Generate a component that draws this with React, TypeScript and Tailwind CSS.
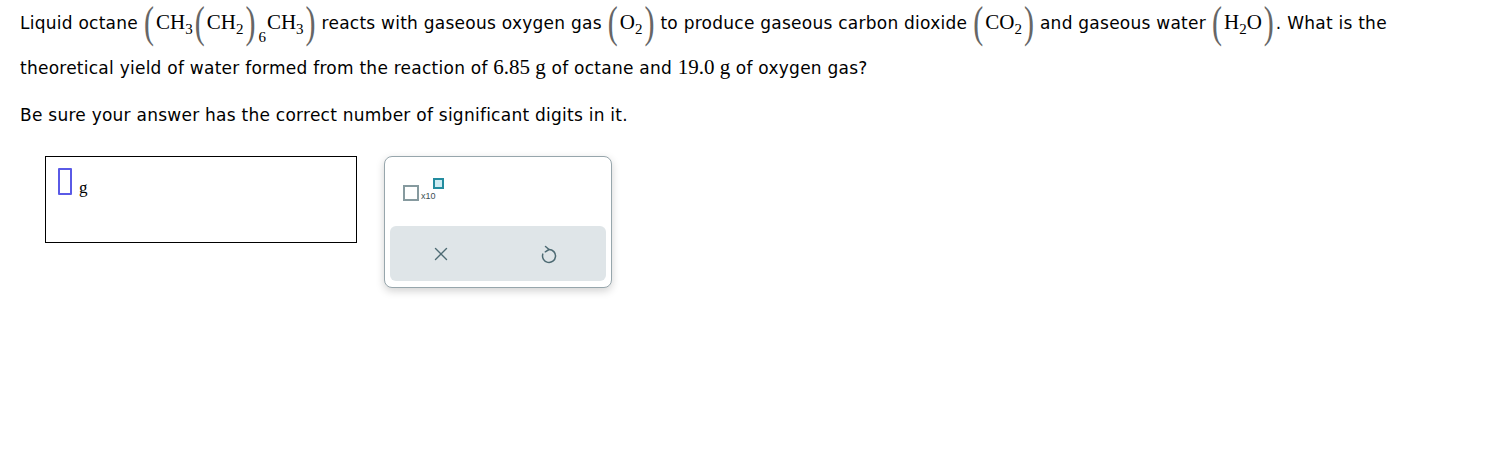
import { X } from "lucide-react";

const sans = "font-['Verdana','DejaVu_Sans',sans-serif]";
const serif = "font-['Liberation_Serif','Times_New_Roman',serif]";

function Paren({ c }: { c: string }) {
  return (
    <span className={`${serif} inline-block text-[30px] leading-[44px] text-[#666] scale-y-[1.45] relative top-[3px] mx-[2px]`}>
      {c}
    </span>
  );
}

function Sub({ n, low = false }: { n: string; low?: boolean }) {
  return (
    <span className={`inline-block text-[15px] leading-none relative ${low ? "top-[13px] mx-[1px]" : "top-[5px]"}`}>{n}</span>
  );
}

function Math({ children }: { children: React.ReactNode }) {
  return <span className={`${serif} text-[21px] tracking-normal inline-flex items-baseline mx-[4px]`}>{children}</span>;
}

function UndoIcon() {
  return (
    <svg width="24" height="24" viewBox="0 0 24 24" fill="none" stroke="#4d6a73" strokeWidth="1.5" strokeLinecap="round" strokeLinejoin="round">
      <path d="M12 7.5a6.5 6.5 0 1 1-6.2 4.6" />
      <path d="M8.5 4.5 12 7.5 8.3 9.8" />
    </svg>
  );
}

export default function App() {
  return (
    <div className={`${sans} text-[17px] tracking-[0.25px] text-black bg-white min-h-[452px] px-5`}>
      <div className="flex items-baseline whitespace-nowrap -mt-[3px]">
        <span>Liquid octane</span>
        <Math>
          <Paren c="(" />
          <span>CH</span>
          <Sub n="3" />
          <Paren c="(" />
          <span>CH</span>
          <Sub n="2" />
          <Paren c=")" />
          <Sub n="6" low />
          <span>CH</span>
          <Sub n="3" />
          <Paren c=")" />
        </Math>
        <span>reacts with gaseous oxygen gas</span>
        <Math>
          <Paren c="(" />
          <span>O</span>
          <Sub n="2" />
          <Paren c=")" />
        </Math>
        <span>to produce gaseous carbon dioxide</span>
        <Math>
          <Paren c="(" />
          <span>CO</span>
          <Sub n="2" />
          <Paren c=")" />
        </Math>
        <span>and gaseous water</span>
        <Math>
          <Paren c="(" />
          <span>H</span>
          <Sub n="2" />
          <span>O</span>
          <Paren c=")" />
        </Math>
        <span className="-ml-[4px]">. What is the</span>
      </div>
      <div className="mt-[11px] whitespace-nowrap">
        theoretical yield of water formed from the reaction of{" "}
        <span className={`${serif} text-[21px] tracking-normal`}>6.85 g</span> of octane and{" "}
        <span className={`${serif} text-[21px] tracking-normal`}>19.0 g</span> of oxygen gas?
      </div>
      <p className="mt-[19px]">Be sure your answer has the correct number of significant digits in it.</p>

      <div className="flex items-start gap-[27px] mt-[28px] ml-[25px]">
        <div className="w-[312px] h-[87px] border border-black pt-[11px] pl-[12px]">
          <div className="flex items-end gap-[7px]">
            <div className="w-[14px] h-[27px] border-2 border-[#5a5ae6] rounded-[1px]" />
            <span className={`${serif} text-[17px] leading-none -mb-[1px]`}>g</span>
          </div>
        </div>

        <div className="w-[228px] h-[132px] border border-[#97a6ac] rounded-[8px] shadow-[0_3px_8px_rgba(0,0,0,0.18)] bg-white px-[5px] pb-[6px] flex flex-col">
          <div className="flex-1 relative">
            <div className="absolute left-[13px] top-[28px] w-[16px] h-[16px] border-2 border-[#869a9f]" />
            <span className="absolute left-[31px] top-[35px] text-[9px] leading-none tracking-normal text-[#3b4f55] font-['Liberation_Sans',sans-serif]">x10</span>
            <div className="absolute left-[43px] top-[21px] w-[11px] h-[11px] border-2 border-[#238c9f] bg-[#cdecf3]" />
          </div>
          <div className="h-[55px] rounded-[6px] bg-[#dfe5e8] grid grid-cols-2 items-center">
            <div className="flex justify-center -ml-[6px]">
              <X className="w-[22px] h-[22px] text-[#4d6a73]" strokeWidth={1.5} />
            </div>
            <div className="flex justify-center -ml-[6px]">
              <UndoIcon />
            </div>
          </div>
        </div>
      </div>
    </div>
  );
}
